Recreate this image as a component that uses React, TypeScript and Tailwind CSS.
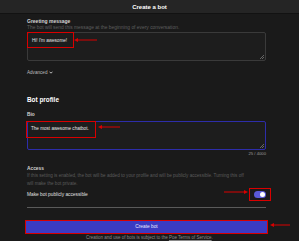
import React from 'react'

function ResizeGrip() {
  return (
    <svg className="absolute right-[1px] bottom-[1px]" width="4" height="4" viewBox="0 0 4 4">
      <path d="M4 0 L0 4 M4 2 L2 4" stroke="#777" strokeWidth="0.8" />
    </svg>
  )
}

export default function App() {
  return (
    <div
      className="relative w-[299px] h-[241px] overflow-hidden bg-[#1a1a1a] text-[#e5e5e5]"
      style={{ fontFamily: '"Liberation Sans", Arial, sans-serif' }}
    >
      {/* Header */}
      <div className="h-[14px] bg-[#252525] border-b border-[#121212] flex items-center justify-center">
        <span className="text-[6px] font-bold text-white leading-none">Create a bot</span>
      </div>

      <div className="pl-[27px] pr-[33px]">
        {/* Greeting */}
        <div className="mt-[4px] text-[5px] font-semibold leading-[6px] text-[#d4d4d4]">Greeting message</div>
        <div className="text-[4.9px] leading-[5px] text-[#5f5f5f] mt-[1px]">
          The bot will send this message at the beginning of every conversation.
        </div>
        <div className="relative mt-[2px] h-[29px] rounded-[2px] border border-[#3a3a3a] bg-[#1d1d1d]">
          <div className="absolute left-[-1px] top-[-1px] w-[47px] h-[16px] border-[1.5px] border-[#d90000]" />
          <div className="pl-[4px] pt-[5px] text-[4.6px] leading-[5px] text-[#e5e5e5]">Hi! I'm awesome!</div>
          <ResizeGrip />
        </div>

        <div className="mt-[9px] flex items-center gap-[2px] text-[4.6px] leading-[5px] text-[#bdbdbd]">
          Advanced
          <svg width="4" height="3" viewBox="0 0 4 3">
            <path d="M0.5 0.7 L2 2.2 L3.5 0.7" stroke="#e5e5e5" strokeWidth="0.8" fill="none" />
          </svg>
        </div>

        {/* Bot profile */}
        <div className="mt-[21px] text-[6.4px] font-bold leading-[8px] text-white">Bot profile</div>
        <div className="mt-[8px] text-[4.8px] font-semibold leading-[5px] text-[#d4d4d4]">Bio</div>
        <div className="relative mt-[4px] h-[29px] rounded-[2px] border-[1.5px] border-[#2d2daa] bg-[#1d1d1d]">
          <div className="absolute left-[-2px] top-[-1.5px] w-[70px] h-[17px] border-[1.5px] border-[#d90000]" />
          <div className="pl-[3px] pt-[4px] text-[4.6px] leading-[5px] text-[#e5e5e5]">The most awesome chatbot.</div>
          <ResizeGrip />
        </div>
        <div className="mt-[1px] text-right text-[4.2px] leading-[5px] text-[#9a9a9a]">25 / 4000</div>

        {/* Access */}
        <div className="mt-[10px] text-[4.8px] font-semibold leading-[5px] text-[#d4d4d4]">Access</div>
        <div className="mt-[1px] text-[4.6px] leading-[8px] text-[#5a5a5a]">
          If this setting is enabled, the bot will be added to your profile and will be publicly accessible. Turning this off
          <br />
          will make the bot private.
        </div>
        <div className="mt-[1px] flex items-center justify-between h-[10px]">
          <span className="text-[4.8px] leading-[5px] text-[#e0e0e0]">Make bot publicly accessible</span>
          <div className="relative">
            <div className="absolute left-[-5px] top-[-3px] w-[22px] h-[13px] border-[1.5px] border-[#d90000]" />
            <div className="w-[12px] h-[7px] rounded-full bg-[#5a5ad8] flex items-center justify-end pr-[1px]">
              <div className="w-[5px] h-[5px] rounded-full bg-white" />
            </div>
          </div>
        </div>

        <div className="mt-[8px] h-px bg-[#5a5a5a]" />

        <button className="mt-[12px] -ml-[2px] w-[243px] h-[14px] border-[1.5px] border-[#d90000] bg-[#3b3bc2] text-[4.8px] text-[#e8e8ff] flex items-center justify-center">
          Create bot
        </button>
      </div>

      <div className="mt-[1px] text-center text-[4.5px] leading-[6px] text-[#8a8a8a]">
        Creation and use of bots is subject to the <span className="underline">Poe Terms of Service</span>.
      </div>

      {/* Annotation arrows */}
      <svg className="absolute inset-0 pointer-events-none" width="299" height="241" viewBox="0 0 299 241">
        <g stroke="#d90000" strokeWidth="1" fill="#d90000">
          <line x1="77" y1="40" x2="97" y2="40" />
          <path d="M74 40 L78 38 L78 42 Z" stroke="none" />
          <line x1="101" y1="127" x2="120" y2="127" />
          <path d="M98 127 L102 125 L102 129 Z" stroke="none" />
          <line x1="224" y1="192" x2="245" y2="192" />
          <path d="M248 192 L244 190 L244 194 Z" stroke="none" />
          <line x1="273" y1="225" x2="290" y2="225" />
          <path d="M270 225 L274 223 L274 227 Z" stroke="none" />
        </g>
      </svg>
    </div>
  )
}
